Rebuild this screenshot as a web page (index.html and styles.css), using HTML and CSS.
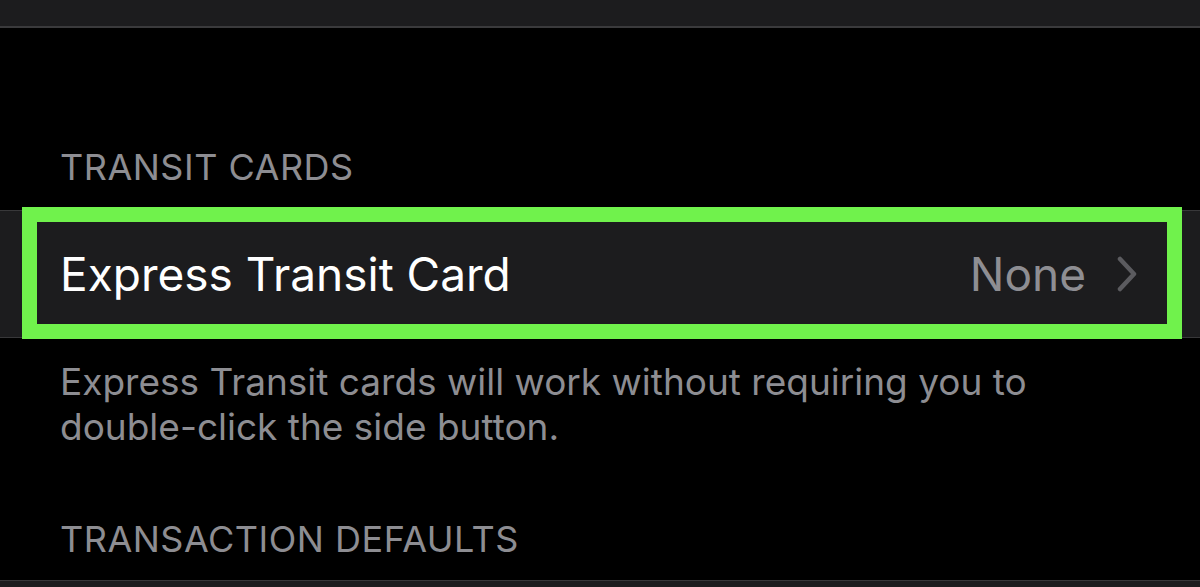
FILE: index.html
```html
<!DOCTYPE html>
<html lang="en">
<head>
    <meta charset="UTF-8">
    <meta name="viewport" content="width=device-width, initial-scale=1.0">
    <title>Wallet &amp; Apple Pay</title>
    <link rel="stylesheet" href="styles.css">
</head>
<body>

    <!-- Previous group (cut off) -->
    <div class="group group-top"></div>

    <!-- Transit cards -->
    <div class="section-header">TRANSIT CARDS</div>
    <div class="group">
        <div class="cell">
            <span class="cell-title">Express Transit Card</span>
            <span class="cell-value">None</span>
            <svg class="chevron" width="22" height="36" viewBox="0 0 22 36">
                <path d="M4 3 L18 18 L4 33" fill="none" stroke="#5b5b5f" stroke-width="4.5" stroke-linecap="round" stroke-linejoin="round"/>
            </svg>
        </div>
        <div class="highlight"></div>
    </div>
    <div class="section-footer">
        Express Transit cards will work without requiring you to<br>
        double-click the side button.
    </div>

    <!-- Transaction defaults -->
    <div class="section-header header-second">TRANSACTION DEFAULTS</div>
    <div class="group group-bottom"></div>

</body>
</html>
```

FILE: styles.css
```css
* {
    margin: 0;
    padding: 0;
    box-sizing: border-box;
}

body {
    background-color: #000;
    font-family: 'Inter', 'Noto Sans', sans-serif;
    width: 1200px;
    height: 587px;
    overflow: hidden;
}

.group {
    background-color: #1c1c1e;
    border-top: 1px solid #38383a;
    border-bottom: 1px solid #38383a;
    position: relative;
}

.group-top {
    height: 28px;
    border-top: none;
    border-bottom: 2px solid #3a3a3c;
}

.group-bottom {
    height: 7px;
    border-bottom: none;
}

.section-header {
    color: #8d8d92;
    font-size: 36px;
    letter-spacing: 0.5px;
    padding: 121px 0 0 60px;
    height: 182px;
    line-height: 1;
}

.header-second {
    padding-top: 72px;
    height: 131px;
}

.cell {
    height: 126px;
    display: flex;
    align-items: center;
    padding: 0 62px 0 60px;
}

.cell-title {
    color: #fff;
    font-size: 46px;
    flex: 1;
}

.cell-value {
    color: #8e8e93;
    font-size: 46px;
    margin-right: 30px;
}

.chevron {
    display: block;
}

/* green annotation box drawn over the row */
.highlight {
    position: absolute;
    left: 22px;
    right: 18px;
    top: -4px;
    bottom: -2px;
    border: 15px solid #70f24c;
}

.section-footer {
    color: #8d8d92;
    font-size: 37px;
    line-height: 45px;
    padding: 21px 0 0 60px;
    height: 111px;
}
```
